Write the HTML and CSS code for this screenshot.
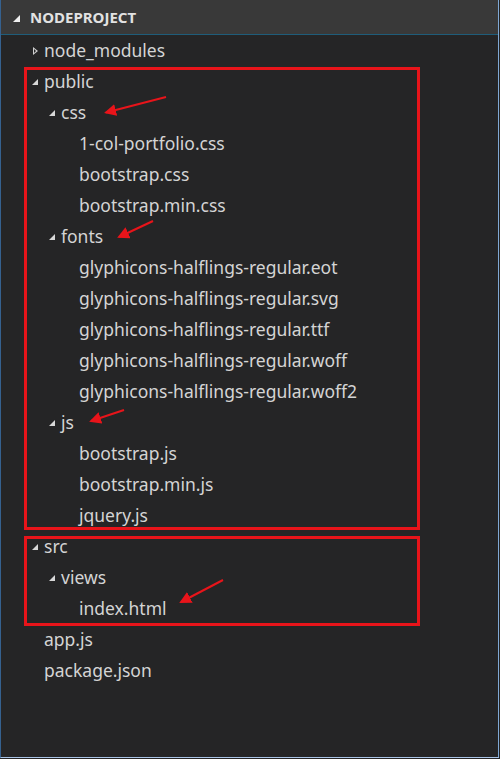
FILE: index.html
```html
<!DOCTYPE html>
<html>
<head>
<meta charset="utf-8">
<link rel="stylesheet" href="styles.css">
</head>
<body>
<div class="frame">
  <div class="header"><span class="twisty open hdr"></span><span class="title">NODEPROJECT</span></div>
  <ul class="tree">
    <li class="row d0"><span class="twisty closed"></span><span class="label">node_modules</span></li>
    <li class="row d0"><span class="twisty open"></span><span class="label">public</span></li>
    <li class="row d1"><span class="twisty open"></span><span class="label">css</span></li>
    <li class="row d2"><span class="twisty"></span><span class="label">1-col-portfolio.css</span></li>
    <li class="row d2"><span class="twisty"></span><span class="label">bootstrap.css</span></li>
    <li class="row d2"><span class="twisty"></span><span class="label">bootstrap.min.css</span></li>
    <li class="row d1"><span class="twisty open"></span><span class="label">fonts</span></li>
    <li class="row d2"><span class="twisty"></span><span class="label">glyphicons-halflings-regular.eot</span></li>
    <li class="row d2"><span class="twisty"></span><span class="label">glyphicons-halflings-regular.svg</span></li>
    <li class="row d2"><span class="twisty"></span><span class="label">glyphicons-halflings-regular.ttf</span></li>
    <li class="row d2"><span class="twisty"></span><span class="label">glyphicons-halflings-regular.woff</span></li>
    <li class="row d2"><span class="twisty"></span><span class="label">glyphicons-halflings-regular.woff2</span></li>
    <li class="row d1"><span class="twisty open"></span><span class="label">js</span></li>
    <li class="row d2"><span class="twisty"></span><span class="label">bootstrap.js</span></li>
    <li class="row d2"><span class="twisty"></span><span class="label">bootstrap.min.js</span></li>
    <li class="row d2"><span class="twisty"></span><span class="label">jquery.js</span></li>
    <li class="row d0"><span class="twisty open"></span><span class="label">src</span></li>
    <li class="row d1"><span class="twisty open"></span><span class="label">views</span></li>
    <li class="row d2"><span class="twisty"></span><span class="label">index.html</span></li>
    <li class="row d0"><span class="twisty"></span><span class="label">app.js</span></li>
    <li class="row d0"><span class="twisty"></span><span class="label">package.json</span></li>
  </ul>
  <svg class="annot" width="500" height="759" viewBox="0 0 500 759">
    <defs>
      <marker id="ah" markerWidth="6" markerHeight="6" refX="5" refY="3" orient="auto" markerUnits="strokeWidth">
        <path d="M0,0 L6,3 L0,6 Z" fill="#e8141a"/>
      </marker>
    </defs>
    <rect x="25.5" y="68.5" width="393" height="460" fill="none" stroke="#e8141a" stroke-width="3"/>
    <rect x="25.5" y="537.5" width="393" height="87" fill="none" stroke="#e8141a" stroke-width="3"/>
    <line x1="166" y1="97" x2="106" y2="112.5" stroke="#e8141a" stroke-width="2" marker-end="url(#ah)"/>
    <line x1="153" y1="221" x2="119" y2="237" stroke="#e8141a" stroke-width="2" marker-end="url(#ah)"/>
    <line x1="124" y1="410" x2="91" y2="421" stroke="#e8141a" stroke-width="2" marker-end="url(#ah)"/>
    <line x1="223" y1="580" x2="181" y2="602" stroke="#e8141a" stroke-width="2" marker-end="url(#ah)"/>
  </svg>
</div>
</body>
</html>
```
FILE: styles.css
```css
html, body {
  margin: 0;
  padding: 0;
  background: #252526;
}
.frame {
  position: relative;
  width: 497px;
  height: 757px;
  background: #252526;
  border-left: 1px solid #35618f;
  border-right: 1px solid #7fa8d4;
  border-bottom: 1px solid #a9c4e6;
  overflow: hidden;
  font-family: "Noto Sans", "Open Sans", sans-serif;
  color: #d4d4d4;
}
.header {
  height: 34px;
  background: #393939;
  border-bottom: 1px solid #1f5d7a;
  display: flex;
  align-items: center;
  padding-left: 12px;
}
.title {
  font-weight: bold;
  font-size: 15px;
  color: #e2e2e2;
  margin-left: 3px;
}
.tree {
  list-style: none;
  margin: 0;
  padding: 0;
}
.row {
  height: 31px;
  display: flex;
  align-items: center;
  font-size: 17.5px;
  white-space: nowrap;
}
.d0 { padding-left: 31px; }
.d1 { padding-left: 48px; }
.d2 { padding-left: 66px; }
.twisty {
  width: 12px;
  height: 31px;
  flex: none;
  position: relative;
}
.twisty.open::before {
  content: "";
  position: absolute;
  left: 0;
  top: 13px;
  width: 0;
  height: 0;
  border-left: 6px solid transparent;
  border-bottom: 6px solid #d8d8d8;
}
.twisty.closed::before {
  content: "";
  position: absolute;
  left: 1px;
  top: 12px;
  width: 0;
  height: 0;
  border-top: 4px solid transparent;
  border-bottom: 4px solid transparent;
  border-left: 5px solid #cfcfcf;
}
.twisty.closed::after {
  content: "";
  position: absolute;
  left: 2px;
  top: 14px;
  width: 0;
  height: 0;
  border-top: 2px solid transparent;
  border-bottom: 2px solid transparent;
  border-left: 2.5px solid #252526;
}
.header .twisty.hdr {
  height: 34px;
  width: 14px;
}
.header .twisty.hdr::before {
  top: 15px;
  border-left-width: 7px;
  border-bottom-width: 7px;
  border-bottom-color: #f0f0f0;
}
.label {
  line-height: 31px;
  padding-bottom: 1px;
}
.annot {
  position: absolute;
  left: -1px;
  top: 0;
  pointer-events: none;
}
```
